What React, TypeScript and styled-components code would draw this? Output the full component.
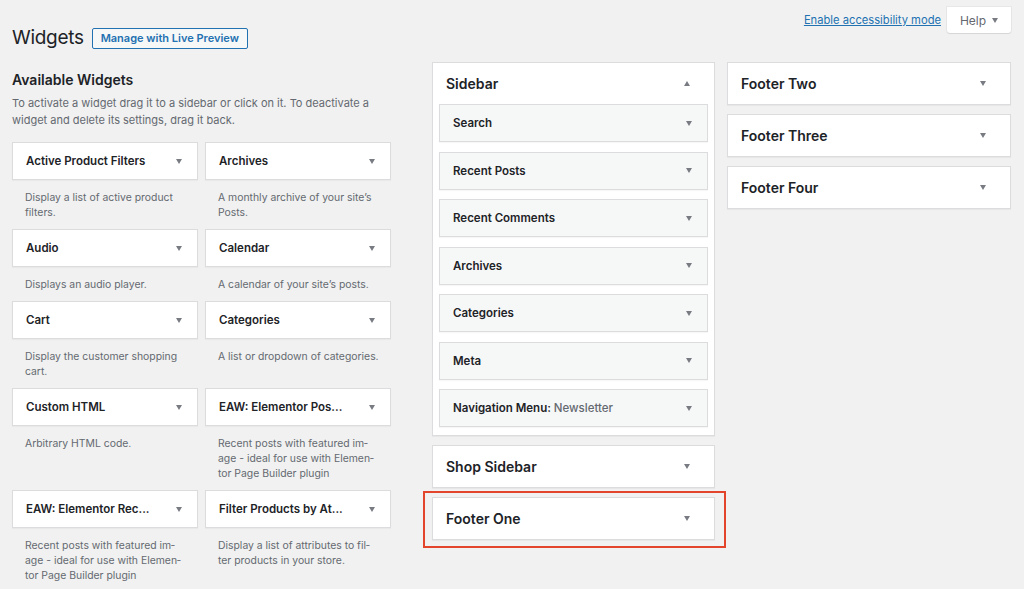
import React from "react";
import styled, { createGlobalStyle } from "styled-components";

const Global = createGlobalStyle`
  html, body { margin: 0; padding: 0; background: #f1f1f1; }
  body { font-family: Inter, "Noto Sans", Arial, sans-serif; color: #1d2327; -webkit-font-smoothing: antialiased; }
  * { box-sizing: border-box; }
`;

const Page = styled.div`
  width: 1024px;
  height: 589px;
  overflow: hidden;
  padding: 0 13px 0 12px;
  background: #f1f1f1;
`;

const TopBar = styled.div`
  display: flex;
  justify-content: space-between;
  align-items: flex-start;
  height: 62px;
`;

const TitleRow = styled.div`
  display: flex;
  align-items: center;
  gap: 8px;
  padding-top: 27px;
`;

const H1 = styled.h1`
  margin: 0;
  font-size: 19px;
  font-weight: 400;
  line-height: 22px;
  color: #1d2327;
  letter-spacing: -0.3px;
`;

const LiveButton = styled.button`
  font-family: inherit;
  height: 21px;
  padding: 0 8px;
  border: 1px solid #2271b1;
  border-radius: 2px;
  background: #f6f7f7;
  color: #2271b1;
  font-size: 11px;
  font-weight: 600;
  line-height: 19px;
`;

const MetaLinks = styled.div`
  display: flex;
  align-items: center;
  gap: 6px;
  padding-top: 7px;
`;

const A11yLink = styled.a`
  font-size: 11.2px;
  color: #2271b1;
  text-decoration: underline;
  white-space: nowrap;
`;

const HelpButton = styled.button`
  font-family: inherit;
  width: 64px;
  height: 26px;
  background: #fff;
  border: none;
  border-radius: 0 0 3px 3px;
  box-shadow: 0 0 0 1px rgba(0, 0, 0, 0.04), 0 1px 1px rgba(0, 0, 0, 0.08);
  color: #646970;
  font-size: 12px;
  display: flex;
  align-items: center;
  justify-content: center;
  gap: 6px;
`;

const Columns = styled.div`
  display: flex;
  align-items: flex-start;
  gap: 12px;
`;

const LeftCol = styled.div`
  flex: 0 0 379px;
  padding-top: 9px;
  margin-right: 29px;
`;

const SectionTitle = styled.h2`
  margin: 0;
  font-size: 14px;
  font-weight: 600;
  line-height: 18px;
`;

const Intro = styled.p`
  margin: 6px 0 13px;
  font-size: 11px;
  line-height: 17px;
  color: #646970;
`;

const WidgetGrid = styled.div`
  display: grid;
  grid-template-columns: 186px 186px;
  column-gap: 7px;
`;

const WidgetCell = styled.div``;

const WidgetBox = styled.div<{ $tone?: "white" | "grey" }>`
  height: 38px;
  display: flex;
  align-items: center;
  justify-content: space-between;
  padding: 0 15px 0 13px;
  background: ${(p) => (p.$tone === "grey" ? "#f6f7f7" : "#fff")};
  border: 1px solid #dcdcde;
  box-shadow: 0 1px 1px rgba(0, 0, 0, 0.03);
  font-size: 11.5px;
  font-weight: 600;
  white-space: nowrap;
`;

const Desc = styled.div`
  padding: 10px 12px 9px 13px;
  font-size: 10.4px;
  line-height: 15px;
  color: #646970;
`;

const Arrow = styled.span<{ $up?: boolean }>`
  width: 0;
  height: 0;
  border-left: 3.5px solid transparent;
  border-right: 3.5px solid transparent;
  ${(p) => (p.$up ? "border-bottom: 5px solid #787c82;" : "border-top: 5px solid #787c82;")}
  flex: none;
`;

const Stack = styled.div<{ $w: number }>`
  flex: 0 0 ${(p) => p.$w}px;
  display: flex;
  flex-direction: column;
  gap: 9px;
`;

const Panel = styled.div`
  position: relative;
  background: #fff;
  border: 1px solid #dcdcde;
  box-shadow: 0 1px 1px rgba(0, 0, 0, 0.04);
`;

const PanelHead = styled.div<{ $h: number }>`
  height: ${(p) => p.$h}px;
  display: flex;
  align-items: center;
  justify-content: space-between;
  padding: 0 24px 0 13px;
  font-size: 14px;
  font-weight: 600;
  white-space: nowrap;
`;

const PanelBody = styled.div`
  display: flex;
  flex-direction: column;
  gap: 9.5px;
  padding: 0 6px 8px;
`;

const InnerBox = styled(WidgetBox)`
  padding: 0 15px 0 13px;
`;

const Muted = styled.span`
  color: #646970;
  font-weight: 500;
`;

const Highlight = styled.div`
  position: absolute;
  left: -10px;
  right: -12px;
  top: -7px;
  bottom: -9px;
  border: 2px solid rgb(226, 68, 44);
  pointer-events: none;
`;

const widgets: [string, string][] = [
  ["Active Product Filters", "Display a list of active product filters."],
  ["Archives", "A monthly archive of your site\u2019s Posts."],
  ["Audio", "Displays an audio player."],
  ["Calendar", "A calendar of your site\u2019s posts."],
  ["Cart", "Display the customer shopping cart."],
  ["Categories", "A list or dropdown of categories."],
  ["Custom HTML", "Arbitrary HTML code."],
  ["EAW: Elementor Pos...", "Recent posts with featured im\u00ADage - ideal for use with Elemen\u00ADtor Page Builder plugin"],
  ["EAW: Elementor Rec...", "Recent posts with featured im\u00ADage - ideal for use with Elemen\u00ADtor Page Builder plugin"],
  ["Filter Products by At...", "Display a list of attributes to fil\u00ADter products in your store."],
];

const sidebarWidgets = ["Search", "Recent Posts", "Recent Comments", "Archives", "Categories", "Meta"];

export default function App() {
  return (
    <Page>
      <Global />
      <TopBar>
        <TitleRow>
          <H1>Widgets</H1>
          <LiveButton>Manage with Live Preview</LiveButton>
        </TitleRow>
        <MetaLinks>
          <A11yLink href="#">Enable accessibility mode</A11yLink>
          <HelpButton>
            Help <Arrow />
          </HelpButton>
        </MetaLinks>
      </TopBar>
      <Columns>
        <LeftCol>
          <SectionTitle>Available Widgets</SectionTitle>
          <Intro>
            To activate a widget drag it to a sidebar or click on it. To deactivate a widget and delete its settings, drag it back.
          </Intro>
          <WidgetGrid>
            {widgets.map(([t, d]) => (
              <WidgetCell key={t}>
                <WidgetBox>
                  {t}
                  <Arrow />
                </WidgetBox>
                <Desc>{d}</Desc>
              </WidgetCell>
            ))}
          </WidgetGrid>
        </LeftCol>
        <Stack $w={283}>
          <Panel>
            <PanelHead $h={41}>
              Sidebar
              <Arrow $up />
            </PanelHead>
            <PanelBody>
              {sidebarWidgets.map((w) => (
                <InnerBox key={w} $tone="grey">
                  {w}
                  <Arrow />
                </InnerBox>
              ))}
              <InnerBox $tone="grey">
                <span>
                  Navigation Menu: <Muted>Newsletter</Muted>
                </span>
                <Arrow />
              </InnerBox>
            </PanelBody>
          </Panel>
          <Panel>
            <PanelHead $h={41}>
              Shop Sidebar
              <Arrow />
            </PanelHead>
          </Panel>
          <Panel>
            <PanelHead $h={41}>
              Footer One
              <Arrow />
            </PanelHead>
            <Highlight />
          </Panel>
        </Stack>
        <Stack $w={284}>
          {["Footer Two", "Footer Three", "Footer Four"].map((f) => (
            <Panel key={f}>
              <PanelHead $h={41}>
                {f}
                <Arrow />
              </PanelHead>
            </Panel>
          ))}
        </Stack>
      </Columns>
    </Page>
  );
}
